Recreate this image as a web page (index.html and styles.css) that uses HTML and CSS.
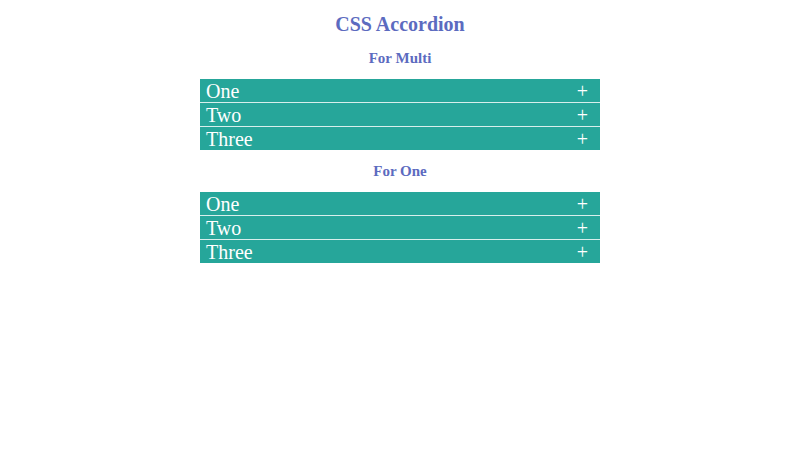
FILE: index.html
```html
<!DOCTYPE html>
<html lang="en">
<head>
  <meta charset="UTF-8">
  <meta name="viewport" content="width=device-width, initial-scale=1.0">
  <title>CSS Accordion</title>
  <link rel="stylesheet" href="styles.css">
</head>
<body>
  <h1 class="title">CSS Accordion</h1>

  <h3 class="subtitle">For Multi</h3>
  <div class="accordion">
    <details class="item">
      <summary class="itemHead"><span>One</span><span class="sign">+</span></summary>
      <div class="itemBody">Lorem ipsum dolor sit amet.</div>
    </details>
    <details class="item">
      <summary class="itemHead"><span>Two</span><span class="sign">+</span></summary>
      <div class="itemBody">Lorem ipsum dolor sit amet.</div>
    </details>
    <details class="item">
      <summary class="itemHead"><span>Three</span><span class="sign">+</span></summary>
      <div class="itemBody">Lorem ipsum dolor sit amet.</div>
    </details>
  </div>

  <h3 class="subtitle">For One</h3>
  <div class="accordion">
    <details class="item" name="single">
      <summary class="itemHead"><span>One</span><span class="sign">+</span></summary>
      <div class="itemBody">Lorem ipsum dolor sit amet.</div>
    </details>
    <details class="item" name="single">
      <summary class="itemHead"><span>Two</span><span class="sign">+</span></summary>
      <div class="itemBody">Lorem ipsum dolor sit amet.</div>
    </details>
    <details class="item" name="single">
      <summary class="itemHead"><span>Three</span><span class="sign">+</span></summary>
      <div class="itemBody">Lorem ipsum dolor sit amet.</div>
    </details>
  </div>
</body>
</html>
```

FILE: styles.css
```css
* {
  margin: 0;
  padding: 0;
  box-sizing: border-box;
}

body {
  font-family: "Liberation Serif", "Times New Roman", serif;
  background-color: #fff;
  display: flex;
  flex-direction: column;
  align-items: center;
  padding-top: 12px;
}

.title {
  font-size: 20px;
  line-height: 24px;
  font-weight: bold;
  color: #5c6bc0;
  margin-bottom: 13px;
}

.subtitle {
  font-size: 15px;
  line-height: 18px;
  font-weight: bold;
  color: #5c6bc0;
  margin-bottom: 12px;
}

.accordion {
  width: 400px;
  margin-bottom: 12px;
}

.item + .item {
  border-top: 1px solid #d7efec;
}

.itemHead {
  list-style: none;
  display: flex;
  justify-content: space-between;
  align-items: center;
  height: 23px;
  line-height: 20px;
  padding: 1px 12px 0 6px;
  font-size: 20px;
  color: #fff;
  background-color: #26a69a;
  cursor: pointer;
}

.itemHead::-webkit-details-marker {
  display: none;
}

.item[open] .sign {
  transform: rotate(45deg);
}

.itemBody {
  padding: 8px 6px;
  font-size: 16px;
  color: #333;
  background-color: #e0f2f1;
}
```
